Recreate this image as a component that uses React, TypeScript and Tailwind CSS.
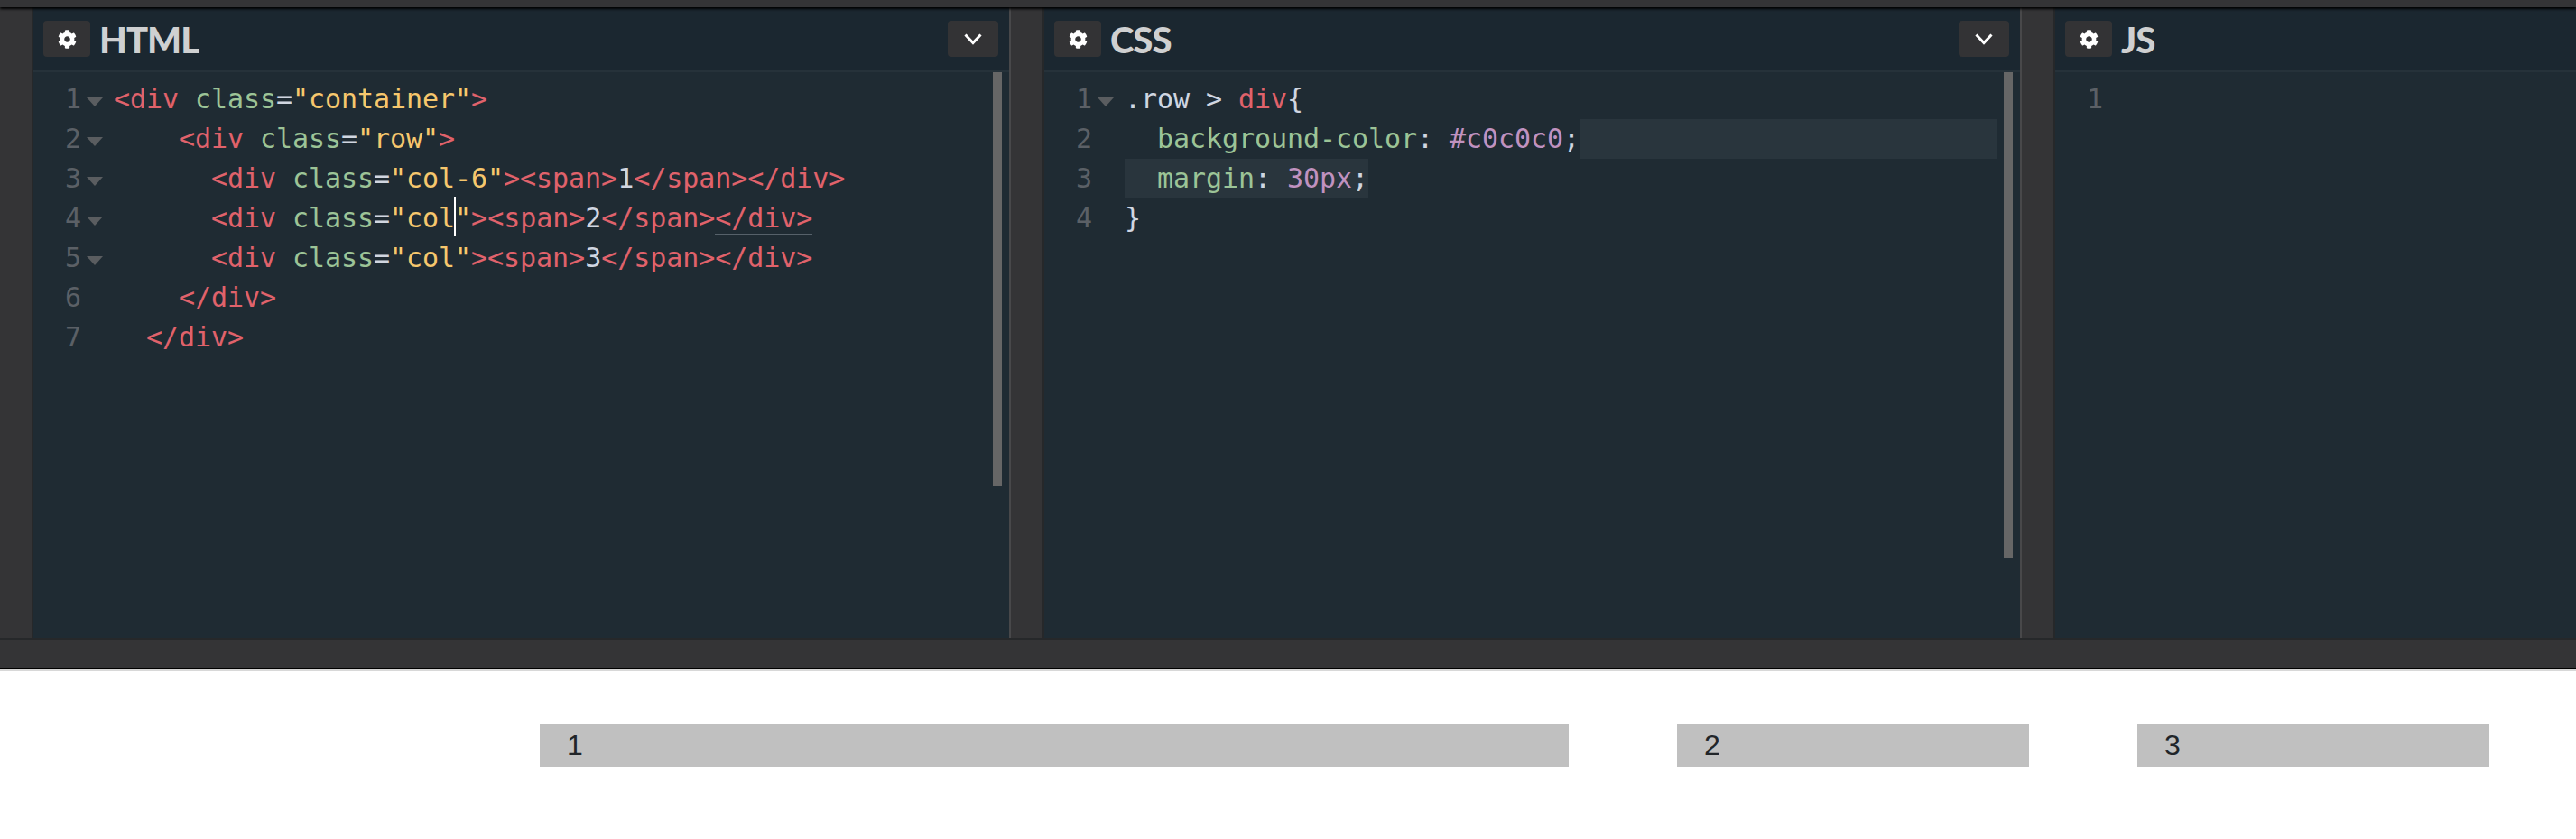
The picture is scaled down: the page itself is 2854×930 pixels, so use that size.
import type { ReactNode } from 'react';
import { FaCog } from 'react-icons/fa';

const RED = 'text-[#e0626b]';
const GREEN = 'text-[#9cc497]';
const YELLOW = 'text-[#f6c76d]';
const PLAIN = 'text-[#d0d6e1]';
const PURPLE = 'text-[#c092c0]';

type Line = { fold?: boolean; code?: ReactNode; selected?: 'full' | 'tail' };

function Tag({ children }: { children: ReactNode }) {
  return <span className={RED}>{children}</span>;
}

function DivOpen({ cls }: { cls: string }) {
  return (
    <>
      <Tag>{'<div'}</Tag> <span className={GREEN}>class</span>
      <span className={PLAIN}>=</span>
      <span className={YELLOW}>{`"${cls}"`}</span>
      <Tag>{'>'}</Tag>
    </>
  );
}

const htmlLines: Line[] = [
  { fold: true, code: <DivOpen cls="container" /> },
  { fold: true, code: <>{'    '}<DivOpen cls="row" /></> },
  {
    fold: true,
    code: (
      <>
        {'      '}
        <DivOpen cls="col-6" />
        <Tag>{'<span>'}</Tag>
        <span className={PLAIN}>1</span>
        <Tag>{'</span></div>'}</Tag>
      </>
    ),
  },
  {
    fold: true,
    code: (
      <>
        {'      '}
        <Tag>{'<div'}</Tag> <span className={GREEN}>class</span>
        <span className={PLAIN}>=</span>
        <span className={YELLOW}>"col</span>
        <span className="relative">
          <span className="absolute -left-px top-[-6px] h-[44px] w-[2px] bg-white" />
        </span>
        <span className={YELLOW}>"</span>
        <Tag>{'>'}</Tag>
        <Tag>{'<span>'}</Tag>
        <span className={PLAIN}>2</span>
        <Tag>{'</span>'}</Tag>
        <span className="border-b-2 border-[#56616a] text-[#e0626b]">{'</div>'}</span>
      </>
    ),
  },
  {
    fold: true,
    code: (
      <>
        {'      '}
        <DivOpen cls="col" />
        <Tag>{'<span>'}</Tag>
        <span className={PLAIN}>3</span>
        <Tag>{'</span></div>'}</Tag>
      </>
    ),
  },
  { code: <>{'    '}<Tag>{'</div>'}</Tag></> },
  { code: <>{'  '}<Tag>{'</div>'}</Tag></> },
];

const cssLines: Line[] = [
  {
    fold: true,
    code: (
      <span className={PLAIN}>
        .row &gt; <Tag>div</Tag>
        {'{'}
      </span>
    ),
  },
  {
    selected: 'tail',
    code: (
      <>
        {'  '}
        <span className={GREEN}>background-color</span>
        <span className={PLAIN}>: </span>
        <span className={PURPLE}>#c0c0c0</span>
        <span className={PLAIN}>;</span>
      </>
    ),
  },
  {
    selected: 'full',
    code: (
      <>
        {'  '}
        <span className={GREEN}>margin</span>
        <span className={PLAIN}>: </span>
        <span className={PURPLE}>30px</span>
        <span className={PLAIN}>;</span>
      </>
    ),
  },
  { code: <span className={PLAIN}>{'}'}</span> },
];

function CodeRow({ n, line }: { n: number; line: Line }) {
  return (
    <div className="flex h-[44px] items-center">
      <div className="flex w-[89px] shrink-0 items-center pl-[35px]">
        <span className="w-[18px] text-[#5b6066]">{n}</span>
        {line.fold && (
          <svg className="ml-[6px] mt-[6px]" width="18" height="10" viewBox="0 0 18 10">
            <path d="M0 0H18L9 10Z" fill="#5a5d60" />
          </svg>
        )}
      </div>
      <div className="flex h-full min-w-0 flex-1 items-center">
        <pre
          className={`font-['DejaVu_Sans_Mono',monospace] leading-[44px] ${
            line.selected === 'full' ? 'bg-[#29353d]' : ''
          }`}
        >
          {line.code}
        </pre>
        {line.selected === 'tail' && <div className="h-full flex-1 bg-[#29353d]" />}
      </div>
    </div>
  );
}

function Pane({
  title,
  lines,
  width,
  thumb,
  chevron = true,
}: {
  title: string;
  lines: Line[];
  width: string;
  thumb?: string;
  chevron?: boolean;
}) {
  return (
    <section className={`flex min-w-0 flex-col bg-[#1f2b33] ${width}`}>
      <header className="flex h-[72px] shrink-0 items-center border-b-2 border-[#26323a] bg-[#1b2730] pl-[11px] pr-[12px]">
        <button className="flex h-[40px] w-[52px] items-center justify-center rounded-[4px] bg-[#333335] text-white">
          <FaCog size={21} />
        </button>
        <h2 className="ml-[10px] mt-[2px] font-['Lato',sans-serif] text-[40px] font-black leading-none tracking-[-1px] text-[#cfd0d1]">
          {title}
        </h2>
        {chevron && (
          <button className="ml-auto flex h-[40px] w-[56px] items-center justify-center rounded-[4px] bg-[#333335]">
            <svg width="20" height="13" viewBox="0 0 20 13" fill="none">
              <path d="M1.5 1.5L10 10.5L18.5 1.5" stroke="#ffffff" strokeWidth="3" />
            </svg>
          </button>
        )}
      </header>
      <div className="flex min-h-0 flex-1">
        <div className="min-w-0 flex-1 pt-[8px] font-['DejaVu_Sans_Mono',monospace] text-[30px] leading-[44px] tracking-[-0.06px]">
          {lines.map((line, i) => (
            <CodeRow key={i} n={i + 1} line={line} />
          ))}
        </div>
        {thumb && (
          <div className="mr-[8px] ml-[8px] w-[10px] shrink-0">
            <div className={`w-full bg-[#666666] ${thumb}`} />
          </div>
        )}
      </div>
    </section>
  );
}

function Divider() {
  return <div className="w-[39px] shrink-0 border-l-2 border-[#48484a] border-r-2 border-r-[#26282a] bg-[#343436]" />;
}

function PreviewBox({ label, width }: { label: string; width: string }) {
  return (
    <div className={`mx-[60px] h-[48px] bg-[#c0c0c0] px-[30px] text-[32px] leading-[48px] text-[#212529] ${width}`}>
      {label}
    </div>
  );
}

export default function App() {
  return (
    <div className="flex h-[930px] w-[2854px] flex-col overflow-hidden bg-white font-['Liberation_Sans',sans-serif]">
      <div className="relative z-10 h-[8px] shrink-0 bg-[#343436] shadow-[0_2px_3px_#000000]" />
      <div className="flex h-[699px] shrink-0 bg-[#343436]">
        <div className="w-[37px] shrink-0 border-r-2 border-[#26282a]" />
        <Pane title="HTML" lines={htmlLines} width="w-[1081px]" thumb="h-[459px]" />
        <Divider />
        <Pane title="CSS" lines={cssLines} width="w-[1081px]" thumb="h-[539px]" />
        <Divider />
        <Pane title="JS" lines={[{}]} width="flex-1" chevron={false} />
      </div>
      <div className="h-[35px] shrink-0 border-t-2 border-[#26282a] border-b-2 border-b-black bg-[#343436]" />
      <div className="h-[2px] shrink-0 bg-[#d8d8d8]" />
      <div className="flex pl-[538px] pt-[58px]">
        <PreviewBox label="1" width="w-[1140px]" />
        <PreviewBox label="2" width="w-[390px]" />
        <PreviewBox label="3" width="w-[390px]" />
      </div>
    </div>
  );
}
